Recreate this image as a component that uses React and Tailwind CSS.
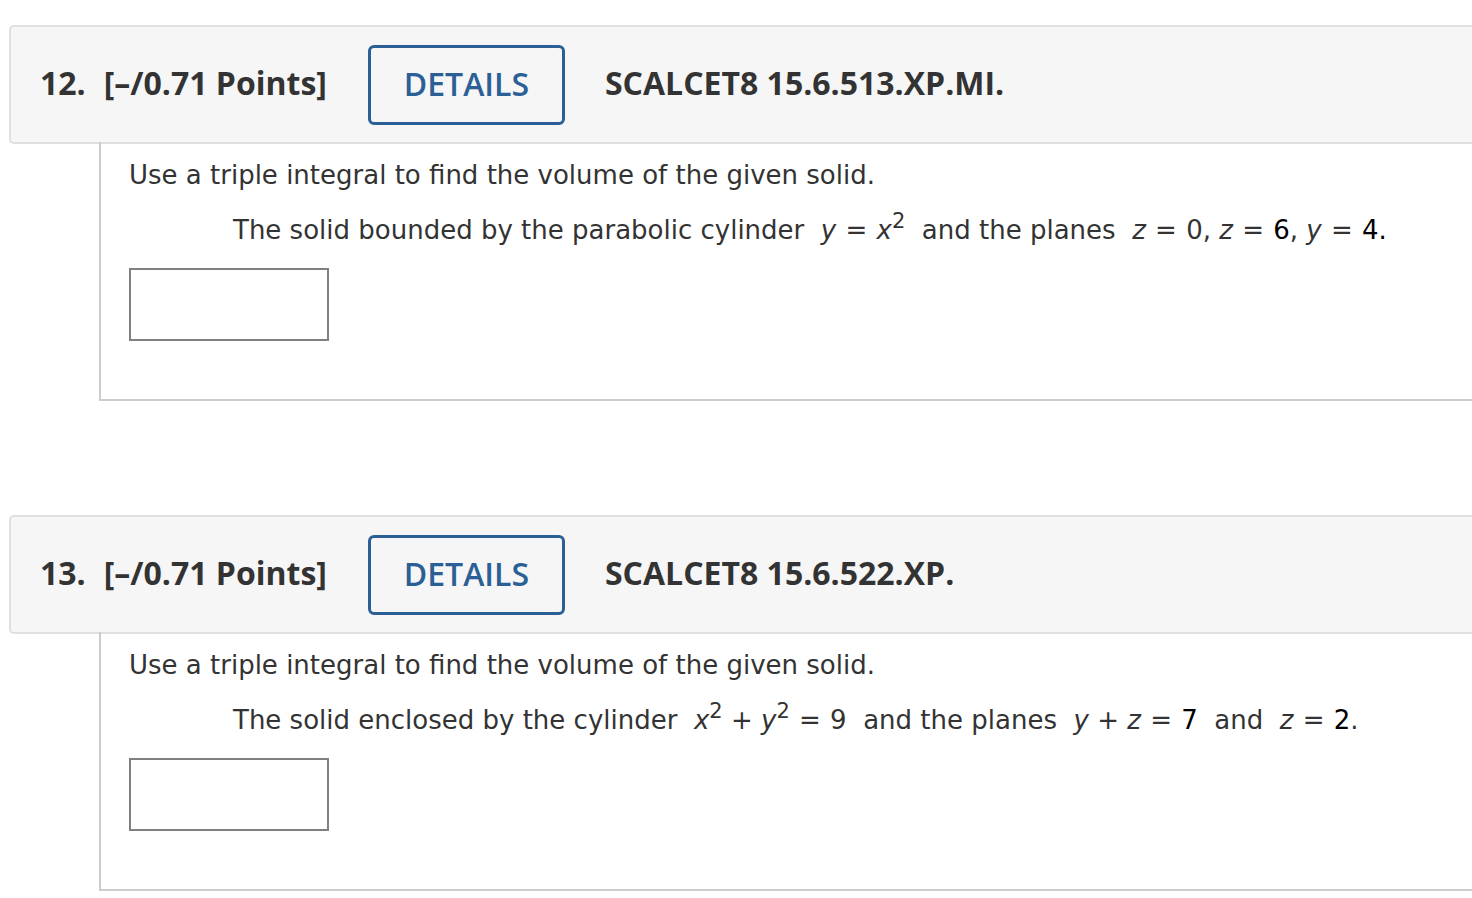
import React from "react";

const head = { fontFamily: '"Open Sans", "Liberation Sans", sans-serif' };
const body = { fontFamily: '"DejaVu Sans", Verdana, sans-serif' };

function V({ children }) {
  return <i className="italic">{children}</i>;
}
function Sup({ children }) {
  return <span className="text-[21px] relative top-[-11px] leading-none">{children}</span>;
}
function B({ children }) {
  return <span className="text-black">{children}</span>;
}
function Eq() {
  return <span className="mx-[1px]">=</span>;
}

function Question({ num, code, children }) {
  return (
    <div>
      <div
        className="ml-[9px] h-[119px] flex items-center border-2 border-r-0 border-[#e0e0e0] rounded-l-[5px] bg-[#f6f6f6] text-[#333333]"
        style={head}
      >
        <span className="ml-[29px] text-[32px] font-bold relative -top-[2px]">{num}.</span>
        <span className="ml-[18px] text-[32px] font-bold relative -top-[2px]">[–/0.71 Points]</span>
        <button className="ml-[41px] w-[197px] h-[80px] border-[3px] border-[#2a6096] rounded-[6px] text-[#2a6096] text-[32px] font-semibold flex items-center justify-center">
          <span className="relative -top-[1px]">DETAILS</span>
        </button>
        <span className="ml-[40px] text-[32px] font-bold relative -top-[2px]">{code}</span>
      </div>
      <div
        className="ml-[99px] -mt-[2px] border-l-2 border-b-2 border-[#cccccc] pl-[28px] pt-[15px] pb-[58px] text-[26px] leading-[36px] text-[#333333]"
        style={body}
      >
        <p>Use a triple integral to find the volume of the given solid.</p>
        <p className="mt-[19px] ml-[104px] whitespace-pre">{children}</p>
        <div className="mt-[20px] w-[200px] h-[73px] border-2 border-[#808080] bg-white"></div>
      </div>
    </div>
  );
}

export default function App() {
  return (
    <div className="w-[1472px] h-[898px] bg-white overflow-hidden pt-[25px]">
      <Question num="12" code="SCALCET8 15.6.513.XP.MI.">
        The solid bounded by the parabolic cylinder  <V>y</V> <Eq /> <V>x</V><Sup>2</Sup>  and the planes  <V>z</V> <Eq /> 0, <V>z</V> <Eq /> <B>6</B>, <V>y</V> <Eq /> <B>4.</B>
      </Question>
      <div className="h-[114px]"></div>
      <Question num="13" code="SCALCET8 15.6.522.XP.">
        The solid enclosed by the cylinder  <V>x</V><Sup>2</Sup> + <V>y</V><Sup>2</Sup> <Eq /> 9  and the planes  <V>y</V> + <V>z</V> <Eq /> <B>7</B>  and  <V>z</V> <Eq /> <B>2</B>.
      </Question>
    </div>
  );
}
